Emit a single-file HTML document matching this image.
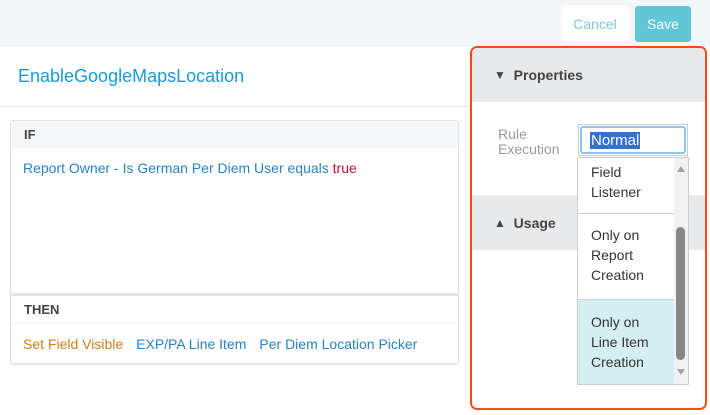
<!DOCTYPE html>
<html><head><style>
*{box-sizing:border-box;margin:0;padding:0}
body{width:710px;height:415px;overflow:hidden;background:#fff;font-family:"Liberation Sans",sans-serif;font-size:14px;position:relative}
.top{position:absolute;left:0;top:0;width:710px;height:47px;background:#f3f6f9}
.btn{position:absolute;top:6px;height:36px;border-radius:3px;text-align:center;line-height:36px;font-size:14px}
.title{position:absolute;left:18px;top:66px;font-size:18px;color:#1a9ad6}
.hr{position:absolute;left:0;top:106px;width:470px;height:1px;background:#e4e6e8}
.card{position:absolute;left:10px;top:120px;width:449px;height:244px;border:1px solid #dfe2e5;border-radius:3px;box-shadow:0 1px 1px #e3e3e3}
.blue{color:#2583c5}
.abs{position:absolute}
.panel{position:absolute;left:470px;top:46px;width:237px;height:364px;border:2px solid #ff4a14;border-radius:7px;overflow:hidden}
</style></head><body>
<div class="top"></div>
<div class="btn" style="left:561px;width:68px;background:#fff;color:#7ec8dc">Cancel</div>
<div class="btn" style="left:635px;width:56px;background:#5fc6d7;color:#fff">Save</div>
<div class="title">EnableGoogleMapsLocation</div>
<div class="hr"></div>
<div class="card">
 <div class="abs" style="left:0;top:0;width:447px;height:27px;background:#f4f6f8"></div>
 <div class="abs" style="left:13px;top:6px;font-weight:bold;font-size:13px;color:#444">IF</div>
 <div class="abs blue" style="left:12px;top:39px">Report Owner - Is German Per Diem User equals <span style="color:#c8102e">true</span></div>
 <div class="abs" style="left:0;top:172px;width:447px;height:3px;background:#e3e5e7"></div>
 <div class="abs" style="left:13px;top:181px;font-weight:bold;font-size:13px;color:#444">THEN</div>
 <div class="abs" style="left:0;top:202px;width:447px;height:1px;background:#eef0f2"></div>
 <div class="abs" style="left:12px;top:215px"><span style="color:#d07d1a">Set Field Visible</span><span class="blue" style="margin-left:13px">EXP/PA Line Item</span><span class="blue" style="margin-left:13px">Per Diem Location Picker</span></div>
</div>
<div class="panel">
 <div class="abs" style="left:0;top:0;width:233px;height:54px;background:#e8e9eb"></div>
 <div class="abs" style="left:22px;top:19px;font-weight:bold;color:#444;font-size:14px"><span style="font-size:12px;vertical-align:1px">&#9660;</span>&nbsp; Properties</div>
 <div class="abs" style="left:26px;top:79px;color:#9a9a9a;line-height:15px">Rule<br>Execution</div>
 <div class="abs" style="left:0;top:147px;width:233px;height:55px;background:#e8e9eb"></div>
 <div class="abs" style="left:22px;top:167px;font-weight:bold;color:#444;font-size:14px"><span style="font-size:12px;vertical-align:1px">&#9650;</span>&nbsp; Usage</div>
 <div class="abs" style="left:106px;top:76px;width:110px;height:32px;border:1px solid #ccc;background:#fff"></div>
 <div class="abs" style="left:108px;top:78px;width:106px;height:28px;border:2px solid #8ec5ee;border-radius:3px;background:#fff"></div>
 <div class="abs" style="left:118px;top:84px;background:#3470d0;color:#fff;font-size:15px;line-height:17px;padding:0 1px">Normal</div>
 <div class="abs" style="left:105px;top:109px;width:112px;height:228px;border:1px solid #ccc;background:#fff;overflow:hidden;color:#333;font-size:14px;line-height:20px">
  <div class="abs" style="left:0;top:0;width:96px;height:56px;border-bottom:1px solid #ccc;padding:4px 13px 0">Field<br>Listener</div>
  <div class="abs" style="left:0;top:57px;width:96px;height:85px;padding:10px 13px 0">Only on<br>Report<br>Creation</div>
  <div class="abs" style="left:0;top:141px;width:96px;height:86px;background:#d5eef2;border-top:1px solid #c5d8dc;padding:12px 13px 0">Only on<br>Line Item<br>Creation</div>
  <div class="abs" style="left:96px;top:0;width:15px;height:228px;background:#f1f1f1"></div>
  <div class="abs" style="left:99px;top:8px;width:0;height:0;border-left:4px solid transparent;border-right:4px solid transparent;border-bottom:6px solid #a3a3a3"></div>
  <div class="abs" style="left:98px;top:69px;width:9px;height:133px;background:#878787;border-radius:5px"></div>
  <div class="abs" style="left:99px;top:211px;width:0;height:0;border-left:4px solid transparent;border-right:4px solid transparent;border-top:6px solid #a3a3a3"></div>
 </div>
</div>
</body></html>
